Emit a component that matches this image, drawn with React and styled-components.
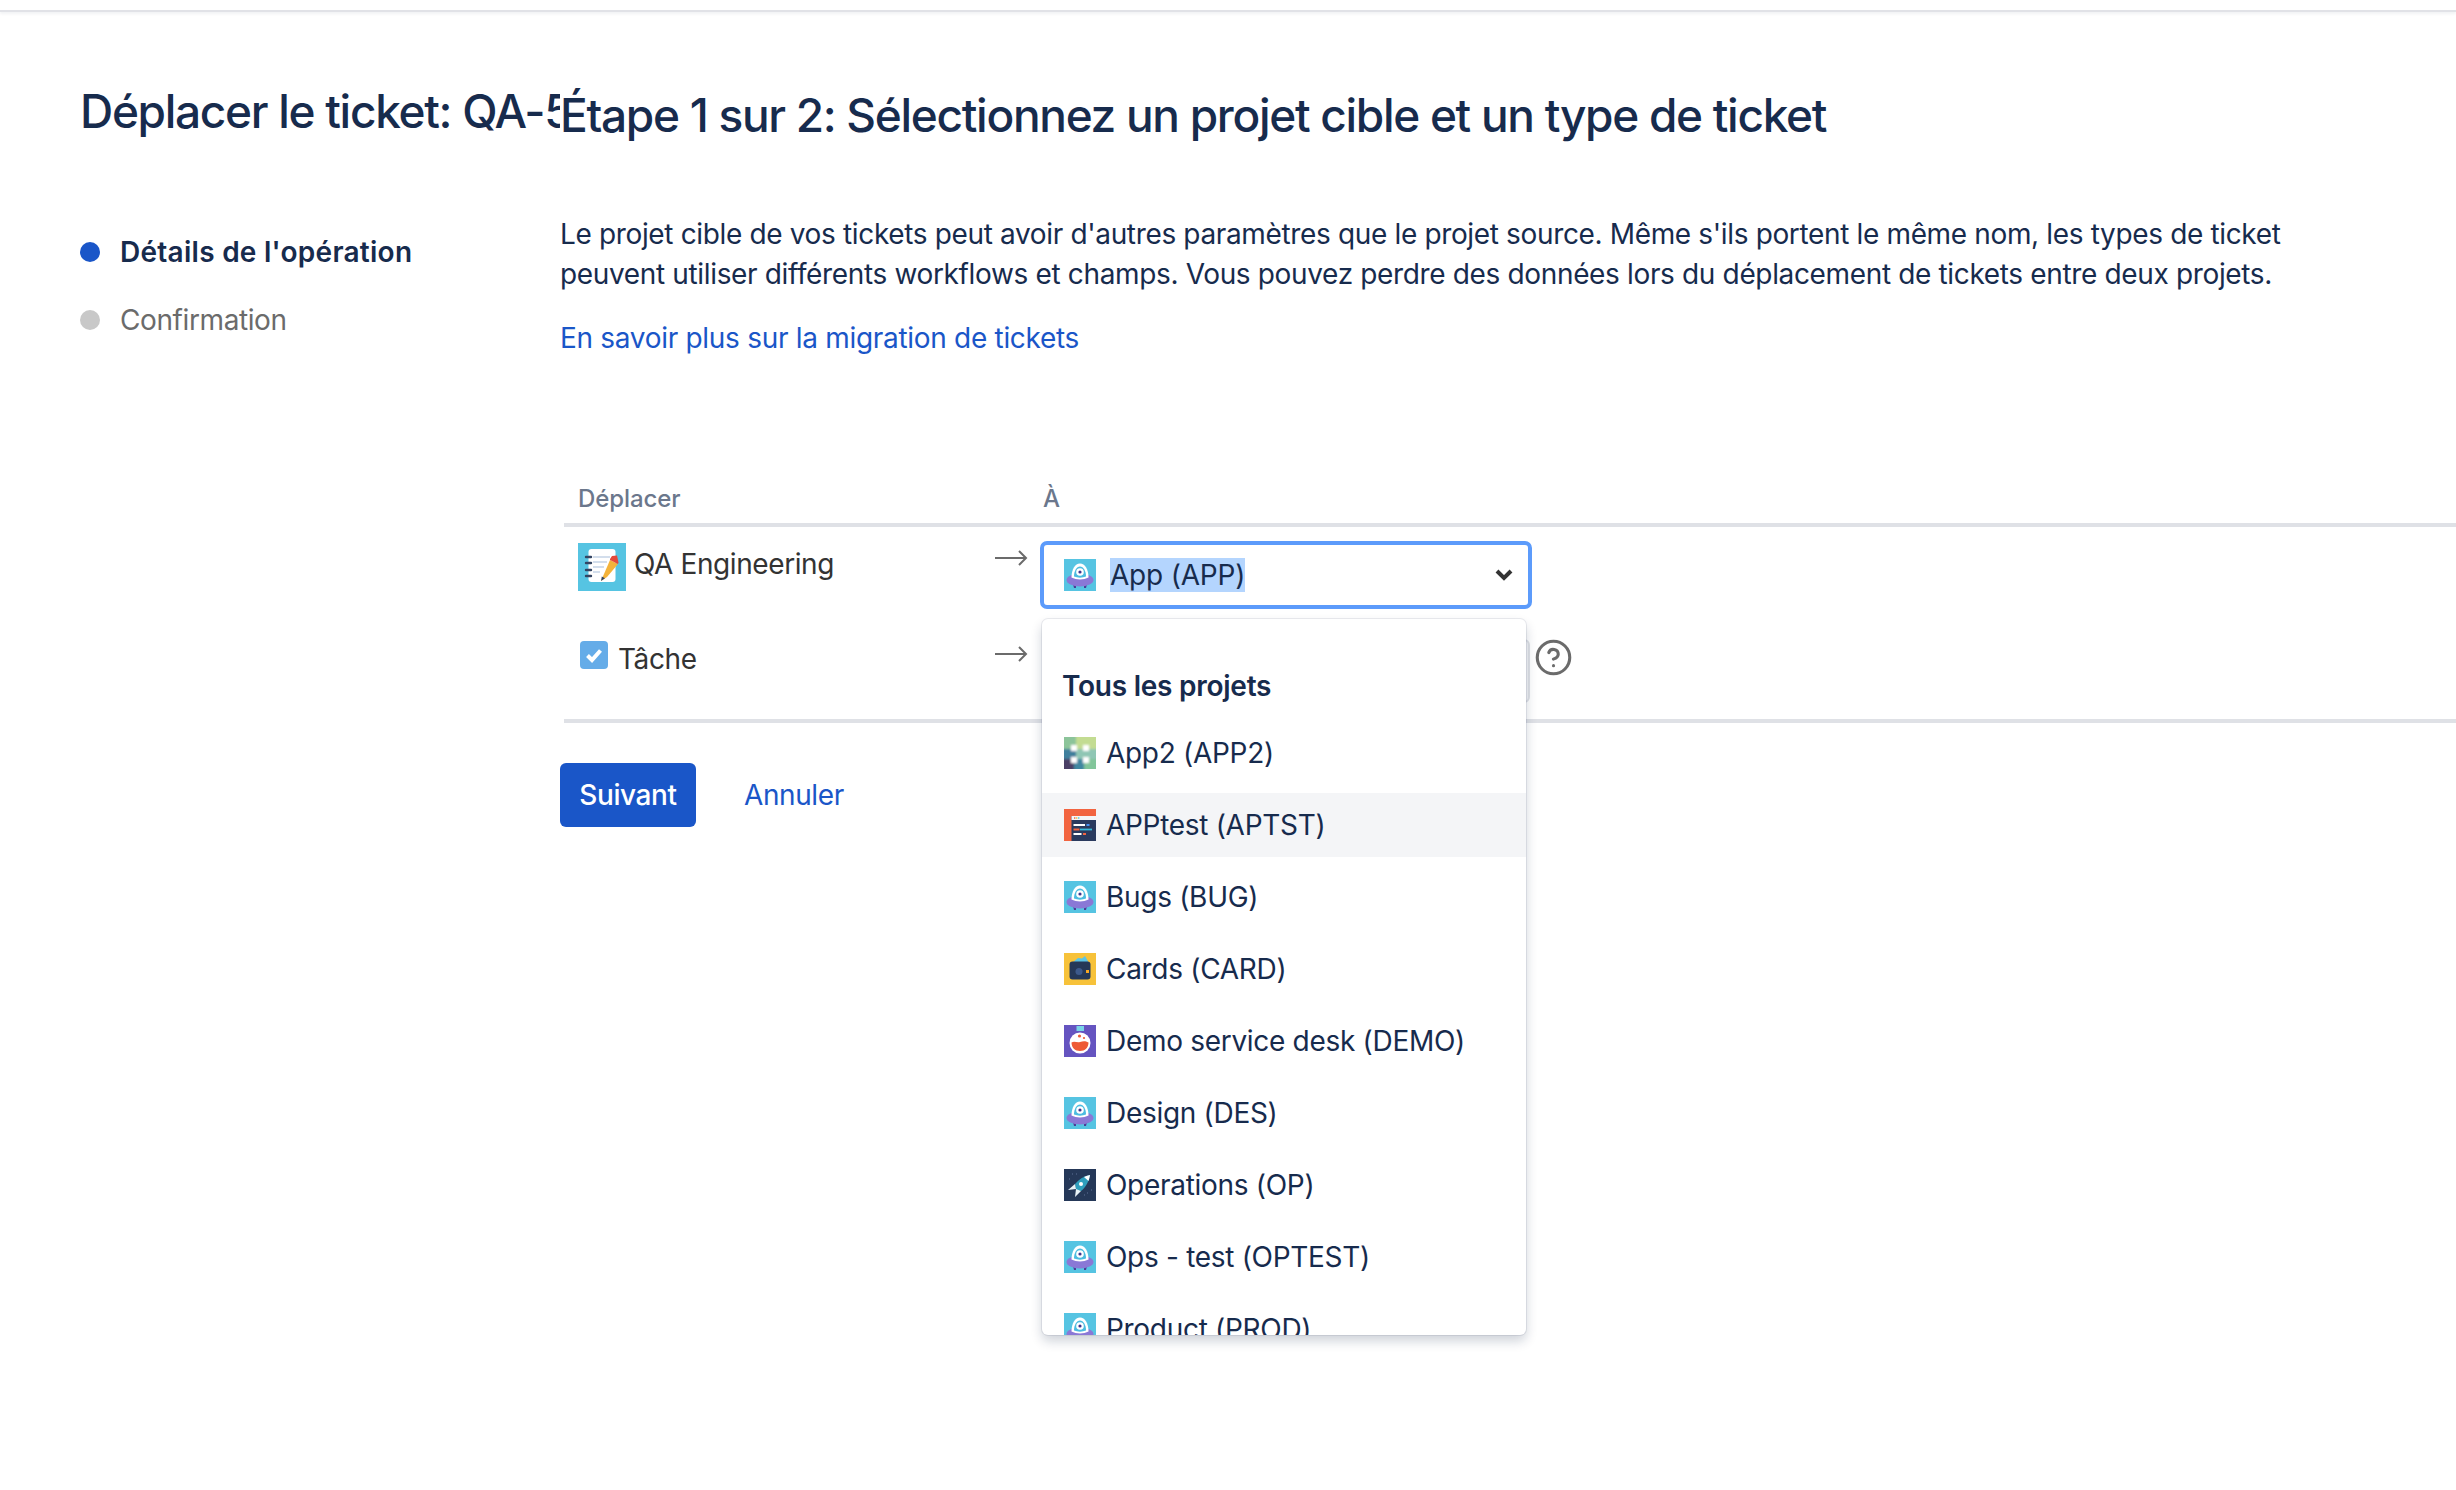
import styled, { createGlobalStyle } from 'styled-components';
import { CircleHelp } from 'lucide-react';

const GlobalStyle = createGlobalStyle`
  html, body {
    margin: 0;
    background: #fff;
    font-family: Inter, "Liberation Sans", sans-serif;
    color: #172b4d;
  }
`;

const TopBar = styled.div`
  height: 10px;
  background: #fff;
  box-shadow: 0 2px 0 #e1e2e7, 0 4px 3px rgba(9, 30, 66, 0.06);
`;

const Layout = styled.div`
  display: grid;
  grid-template-columns: 480px 1fr;
  padding-left: 80px;
  min-height: 1480px;
  overflow: hidden;
`;

const Aside = styled.aside`
  min-width: 0;
  padding-top: 73px;
`;

const PageTitle = styled.h1`
  margin: 0;
  font-size: 46px;
  line-height: 56px;
  font-weight: 500;
  letter-spacing: -1.3px;
  white-space: nowrap;
  overflow: hidden;
`;

const Steps = styled.ol`
  list-style: none;
  margin: 93px 0 0;
  padding: 0;
  display: flex;
  flex-direction: column;
  gap: 28px;
`;

const Step = styled.li`
  display: flex;
  align-items: center;
  gap: 20px;
  height: 40px;
  font-size: 28px;
  letter-spacing: ${(p) => (p.$active ? '0.27px' : '-0.4px')};
  font-weight: ${(p) => (p.$active ? 600 : 400)};
  color: ${(p) => (p.$active ? '#172b4d' : '#6b6b6b')};

  &::before {
    content: '';
    width: 20px;
    height: 20px;
    border-radius: 50%;
    background: ${(p) => (p.$active ? '#1a56c8' : '#c8c8c8')};
  }
`;

const Main = styled.main`
  min-width: 0;
  padding-top: 77px;
`;

const StepTitle = styled.h2`
  margin: 0;
  font-size: 46px;
  line-height: 56px;
  font-weight: 500;
  letter-spacing: -1.3px;
`;

const Intro = styled.p`
  margin: 71px 0 0;
  font-size: 28px;
  line-height: 40px;
  letter-spacing: -0.35px;
  white-space: pre-line;
`;

const LearnMore = styled.a`
  display: block;
  margin-top: 24px;
  font-size: 28px;
  line-height: 40px;
  letter-spacing: -0.3px;
  color: #1a56c8;
  text-decoration: none;
`;

const Table = styled.div`
  margin: 125px 0 0 4px;
`;

const TableRow = styled.div`
  display: grid;
  grid-template-columns: 476px 1fr;
  padding: ${(p) => p.$padding};
  border-bottom: ${(p) => (p.$ruled ? '4px solid #dfe1e6' : 'none')};
`;

const HeadCell = styled.div`
  padding-left: ${(p) => p.$inset}px;
  font-size: 24px;
  line-height: 32px;
  font-weight: 500;
  letter-spacing: -0.1px;
  color: #6b778c;
`;

const SourceCell = styled.div`
  display: flex;
  align-items: flex-start;
  padding: 2px 12px 0 14px;
  font-size: 28px;
  line-height: 40px;
  letter-spacing: -0.4px;
  color: #333;
`;

const SourceLabel = styled.span`
  margin-left: ${(p) => p.$gap}px;
  margin-top: ${(p) => p.$top}px;
`;

const Arrow = styled.svg`
  width: 34px;
  height: 20px;
  flex: none;
  margin-left: auto;
  margin-top: ${(p) => p.$top}px;
`;

const TargetCell = styled.div`
  position: relative;
  display: flex;
  align-items: flex-start;
  gap: 4px;
`;

const Select = styled.div`
  box-sizing: border-box;
  width: 492px;
  height: 68px;
  display: flex;
  align-items: center;
  padding: 0 15px 0 20px;
  border: 4px solid #5c9bfb;
  border-radius: 7px;
  background: #fff;
  font-size: 28px;
  letter-spacing: -0.2px;
`;

const SelectedText = styled.span`
  margin-left: 14px;
  padding: 0;
  line-height: 34px;
  background: #b4d5fe;
`;

const Chevron = styled.svg`
  width: 18px;
  height: 12px;
  margin-left: auto;
`;

const MutedSelect = styled.div`
  width: 486px;
  height: 64px;
  margin-left: 4px;
  flex: none;
  box-sizing: border-box;
  border: 2px solid #dfe1e6;
  border-radius: 6px;
  background: #f4f5f7;
`;

const HelpIcon = styled(CircleHelp)`
  flex: none;
  margin-top: -1px;
`;

const Menu = styled.div`
  position: absolute;
  z-index: 2;
  top: 78px;
  left: 2px;
  width: 484px;
  height: 716px;
  box-sizing: border-box;
  overflow: hidden;
  padding-top: 48px;
  background: #fff;
  border-radius: 6px;
  box-shadow: 0 0 0 1px rgba(9, 30, 66, 0.08), 0 6px 12px rgba(9, 30, 66, 0.2);
`;

const MenuHeading = styled.div`
  padding-left: 20px;
  font-size: 28px;
  line-height: 38px;
  font-weight: 600;
  letter-spacing: -0.25px;
`;

const MenuList = styled.ul`
  list-style: none;
  margin: 16px 0 0;
  padding: 0;
  display: flex;
  flex-direction: column;
  gap: 8px;
`;

const MenuItem = styled.li`
  height: 64px;
  flex: none;
  display: flex;
  align-items: center;
  gap: 10px;
  padding-left: 22px;
  font-size: 28px;
  letter-spacing: -0.3px;
  background: ${(p) => (p.$hover ? '#f4f5f7' : 'transparent')};
`;

const Actions = styled.div`
  display: flex;
  align-items: center;
  gap: 48px;
  margin-top: 40px;
`;

const PrimaryButton = styled.button`
  width: 136px;
  height: 64px;
  border: 0;
  border-radius: 6px;
  background: #1a56c8;
  color: #fff;
  font: 500 28px Inter, sans-serif;
  letter-spacing: -0.4px;
`;

const CancelLink = styled.a`
  font-size: 28px;
  letter-spacing: -0.4px;
  color: #1a56c8;
`;

const Ship = () => (
  <svg width="32" height="32" viewBox="0 0 32 32">
    <rect width="32" height="32" fill="#56c4e2" />
    <path d="M9 25h3v4h-2zM20 25h3l-1 4h-2z" fill="#4a3c96" />
    <ellipse cx="16" cy="21" rx="13.500" ry="6.500" fill="#8a78d6" />
    <path d="M7.500 18.500c0-8 3.500-14 8.500-14s8.500 6 8.500 14c-5 2.500-12 2.500-17 0z" fill="#fff" />
    <path d="M10 17.500c0-5.500 2.500-10 6-10s6 4.500 6 10c-3.500 1.500-8.500 1.500-12 0z" fill="#4cbce0" />
    <circle cx="16" cy="13" r="3.800" fill="#fff" />
    <circle cx="16" cy="13" r="1.600" fill="#40338f" />
  </svg>
);

const Notebook = () => (
  <svg width="48" height="48" viewBox="0 0 48 48">
    <rect width="48" height="48" fill="#56c4e2" />
    <rect x="10.500" y="6" width="27" height="33" rx="3" fill="#fff" />
    <path d="M15 14h17M15 19h14M15 24h11M15 29h7" stroke="#d3deec" strokeWidth="2" />
    <path d="M8 14h5M8 20h5M8 27h5M8 33h5" stroke="#344563" strokeWidth="2.400" strokeLinecap="round" />
    <path d="M32 17l8 4-11 13-6 4z" fill="#f4b33a" />
    <path d="M32 16l2-3 5-.5 1.500 7-.5 1.500-8-4z" fill="#e5493a" />
    <path d="M23 38l.8-4.500 3.200 1.800z" fill="#344563" />
  </svg>
);

const Mosaic = () => (
  <svg width="32" height="32" viewBox="0 0 32 32">
    <defs>
      <filter id="soft" x="-30%" y="-30%" width="160%" height="160%">
        <feGaussianBlur stdDeviation="1.200" />
      </filter>
      <clipPath id="mosaicClip">
        <rect width="32" height="32" />
      </clipPath>
    </defs>
    <g clipPath="url(#mosaicClip)">
      <g filter="url(#soft)">
        <rect x="-4" y="-4" width="16" height="16" fill="#8cc49a" />
        <rect x="12" y="-4" width="24" height="16" fill="#c3dc92" />
        <rect x="-4" y="12" width="16" height="10" fill="#3f7f9c" />
        <rect x="12" y="12" width="24" height="10" fill="#8fc6b4" />
        <rect x="-4" y="22" width="14" height="14" fill="#4c3f66" />
        <rect x="10" y="22" width="10" height="14" fill="#3f87a0" />
        <rect x="20" y="22" width="16" height="14" fill="#82c59a" />
        <rect x="7" y="8" width="6" height="6" fill="#fff" />
        <rect x="19" y="8" width="6" height="6" fill="#fff" />
        <rect x="7" y="20" width="6" height="6" fill="#fff" />
        <rect x="19" y="20" width="6" height="6" fill="#fff" />
      </g>
    </g>
  </svg>
);

const CodeWindow = () => (
  <svg width="32" height="32" viewBox="0 0 32 32">
    <rect width="32" height="32" fill="#f26440" />
    <rect x="7.500" y="7" width="24.500" height="25" fill="#2a3a5e" />
    <rect x="7.500" y="7" width="24.500" height="4" fill="#f4f5f7" />
    <path d="M10 9h1.400" stroke="#f26440" strokeWidth="1.400" />
    <path d="M12 9h1.400" stroke="#f7c23a" strokeWidth="1.400" />
    <path d="M14 9h1.400" stroke="#56c4e2" strokeWidth="1.400" />
    <path d="M9.500 16h11.500M9.500 25h8" stroke="#fff" strokeWidth="1.800" />
    <path d="M22.500 16h3" stroke="#4c9aff" strokeWidth="1.800" />
    <path d="M9.500 20.500h6M19 25h3" stroke="#f26440" strokeWidth="1.800" />
    <path d="M16 20.500h12" stroke="#38b8d8" strokeWidth="1.800" />
  </svg>
);

const Wallet = () => (
  <svg width="32" height="32" viewBox="0 0 32 32">
    <rect width="32" height="32" fill="#f7c23a" />
    <path d="M8 10l6-5 4 .5 3-2.500 4 7z" fill="#5cc4e6" />
    <rect x="5.500" y="8.500" width="21" height="18" rx="3" fill="#253858" />
    <circle cx="15" cy="18.500" r="3.500" fill="#3d5a8c" />
    <rect x="22" y="17" width="3" height="3" fill="#f7a823" />
  </svg>
);

const Flask = () => (
  <svg width="32" height="32" viewBox="0 0 32 32">
    <rect width="32" height="32" fill="#6554c0" />
    <rect x="12.500" y="1" width="7.500" height="5" fill="#79d4e8" />
    <circle cx="16" cy="18" r="10.500" fill="#fff" />
    <path d="M7.500 17.500c3-2 5.500 .5 8.500-.5s5-1.500 8.500 .5c0 5-3.500 8.500-8.500 8.500s-8.500-3.500-8.500-8.500z" fill="#ee5a36" />
    <circle cx="15.500" cy="11" r="1.600" fill="#ee5a36" />
    <circle cx="20" cy="13" r="1.100" fill="#ee5a36" />
  </svg>
);

const Rocket = () => (
  <svg width="32" height="32" viewBox="0 0 32 32">
    <rect width="32" height="32" fill="#253858" />
    <path d="M5 10h1M12 5h1M27 21h1M20 26h1M8 5h1M23 24h1" stroke="#5e7196" strokeWidth="1.200" />
    <path d="M26 6c-6 1-11 4-15 9l1 6 5 1c5-4 8-10 9-16z" fill="#2f9fbd" />
    <path d="M26 6c-2 .4-4 1-6 2l4.500 4c.7-2 1.200-4 1.500-6z" fill="#fff" />
    <path d="M11 15l-7 6 8-1zM17 22l-6 6 1-8z" fill="#e9f3f7" />
    <circle cx="17" cy="15" r="2" fill="#fff" />
  </svg>
);

const CheckBadge = styled.svg`
  width: 28px;
  height: 28px;
  margin-left: 2px;
  flex: none;
`;

const ArrowIcon = ({ top }) => (
  <Arrow $top={top} viewBox="0 0 34 20" fill="none" stroke="#6b6b6b">
    <path d="M1 10h31" strokeWidth="2" />
    <path d="M25 3l7 7-7 7" strokeWidth="2" />
  </Arrow>
);

const projects = [
  { name: 'App2 (APP2)', Icon: Mosaic },
  { name: 'APPtest (APTST)', Icon: CodeWindow, hover: true },
  { name: 'Bugs (BUG)', Icon: Ship },
  { name: 'Cards (CARD)', Icon: Wallet },
  { name: 'Demo service desk (DEMO)', Icon: Flask },
  { name: 'Design (DES)', Icon: Ship },
  { name: 'Operations (OP)', Icon: Rocket },
  { name: 'Ops - test (OPTEST)', Icon: Ship },
  { name: 'Product (PROD)', Icon: Ship },
];

export default function App() {
  return (
    <>
      <GlobalStyle />
      <TopBar />
      <Layout>
        <Aside>
          <PageTitle>Déplacer le ticket: QA-5</PageTitle>
          <Steps>
            <Step $active>Détails de l'opération</Step>
            <Step>Confirmation</Step>
          </Steps>
        </Aside>
        <Main>
          <StepTitle>Étape 1 sur 2: Sélectionnez un projet cible et un type de ticket</StepTitle>
          <Intro>
            {"Le projet cible de vos tickets peut avoir d'autres paramètres que le projet source. Même s'ils portent le même nom, les types de ticket\npeuvent utiliser différents workflows et champs. Vous pouvez perdre des données lors du déplacement de tickets entre deux projets."}
          </Intro>
          <LearnMore href="#">En savoir plus sur la migration de tickets</LearnMore>
          <Table>
            <TableRow $ruled $padding="0 0 8px">
              <HeadCell $inset={14}>Déplacer</HeadCell>
              <HeadCell $inset={3}>À</HeadCell>
            </TableRow>
            <TableRow $padding="14px 0 16px">
              <SourceCell>
                <Notebook />
                <SourceLabel $gap={8} $top={1}>QA Engineering</SourceLabel>
                <ArrowIcon top={5} />
              </SourceCell>
              <TargetCell>
                <Select>
                  <Ship />
                  <SelectedText>App (APP)</SelectedText>
                  <Chevron viewBox="0 0 18 12" fill="none" stroke="#333" strokeWidth="4">
                    <path d="M2 2l7 7 7-7" />
                  </Chevron>
                </Select>
                <Menu>
                  <MenuHeading>Tous les projets</MenuHeading>
                  <MenuList>
                    {projects.map(({ name, Icon, hover }) => (
                      <MenuItem key={name} $hover={hover}>
                        <Icon />
                        {name}
                      </MenuItem>
                    ))}
                  </MenuList>
                </Menu>
              </TargetCell>
            </TableRow>
            <TableRow $ruled $padding="14px 0 16px">
              <SourceCell>
                <CheckBadge viewBox="0 0 28 28">
                  <rect width="28" height="28" rx="4" fill="#65ace8" />
                  <path d="M7.500 14.500l4.500 4.500 8.500-9.500" fill="none" stroke="#fff" strokeWidth="4" />
                </CheckBadge>
                <SourceLabel $gap={10} $top={-2}>Tâche</SourceLabel>
                <ArrowIcon top={3} />
              </SourceCell>
              <TargetCell>
                <MutedSelect />
                <HelpIcon size={39} strokeWidth={1.9} color="#6b6b6b" />
              </TargetCell>
            </TableRow>
          </Table>
          <Actions>
            <PrimaryButton>Suivant</PrimaryButton>
            <CancelLink>Annuler</CancelLink>
          </Actions>
        </Main>
      </Layout>
    </>
  );
}
